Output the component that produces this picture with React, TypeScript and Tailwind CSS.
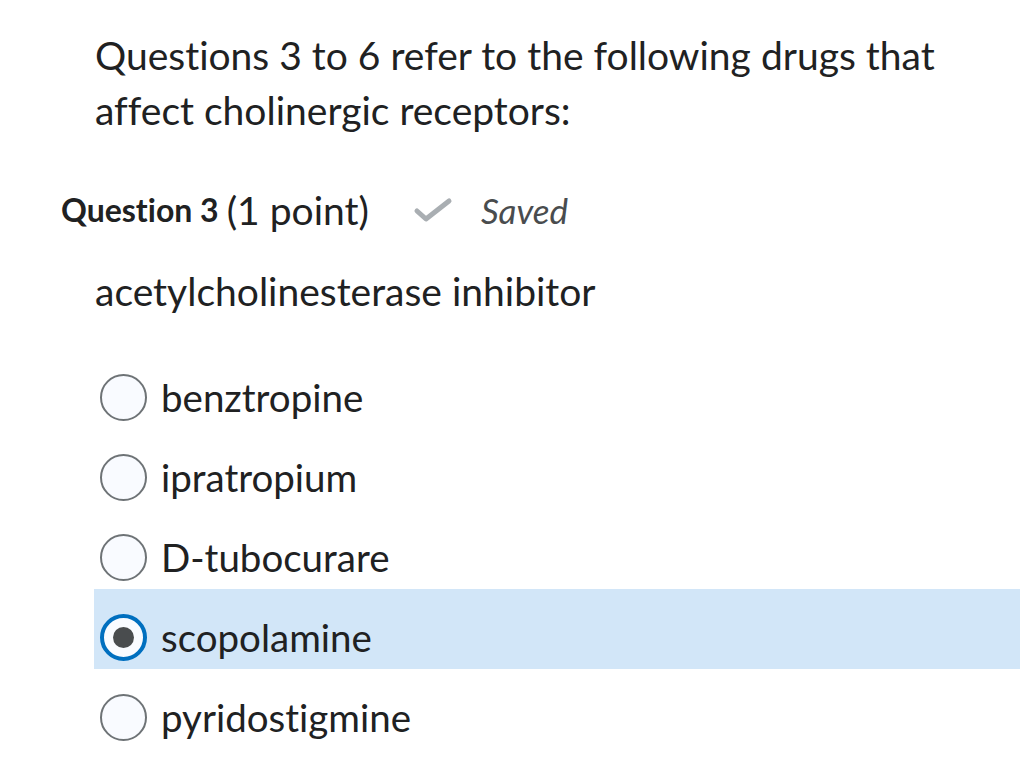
import React from "react";

const options = ["benztropine", "ipratropium", "D-tubocurare", "scopolamine", "pyridostigmine"];

function Radio({ checked }: { checked: boolean }) {
  if (checked) {
    return (
      <span className="flex h-[47px] w-[47px] shrink-0 items-center justify-center rounded-full border-[4px] border-[#006fbf] bg-[#f9fbff]">
        <span className="h-[21px] w-[21px] rounded-full bg-[#494c4e]" />
      </span>
    );
  }
  return <span className="h-[47px] w-[47px] shrink-0 rounded-full border-2 border-[#6e7376] bg-[#f9fbff]" />;
}

export default function App() {
  const selected = "scopolamine";
  return (
    <div
      className="min-h-screen bg-white text-[#202122] [font-variant-ligatures:none]"
      style={{ fontFamily: "Lato, 'Noto Sans', sans-serif" }}
    >
      <div className="pt-[28px]">
        <h1 className="pl-[95px] pr-[60px] text-[39px] leading-[55px] font-normal">
          Questions 3 to 6 refer to the following drugs that affect cholinergic receptors:
        </h1>

        <div className="mt-[52px] flex items-center pl-[61px] h-[40px]">
          <span className="text-[32px] font-bold">Question 3</span>
          <span className="ml-[8px] text-[39px]">(1 point)</span>
          <svg className="ml-[44px]" width="40" height="26" viewBox="0 0 40 26" fill="none">
            <path d="M4 14 L13 22 L36 4" stroke="#a9aeb2" strokeWidth="5" strokeLinecap="round" strokeLinejoin="round" />
          </svg>
          <span className="ml-[28px] text-[35px] italic text-[#494c4e]">Saved</span>
        </div>

        <p className="mt-[41px] px-[95px] text-[39px] leading-[40px]">acetylcholinesterase inhibitor</p>

        <div className="mt-[38px] ml-[94px] flex flex-col">
          {options.map((o) => {
            const checked = o === selected;
            return (
              <label
                key={o}
                className={`flex h-[80px] items-end pb-[8px] pl-[6px] ${checked ? "bg-[#d2e6f8]" : ""}`}
              >
                <span className="flex items-center gap-[14px]">
                  <Radio checked={checked} />
                  <span className="text-[38.5px] leading-[47px]">{o}</span>
                </span>
              </label>
            );
          })}
        </div>
      </div>
    </div>
  );
}
